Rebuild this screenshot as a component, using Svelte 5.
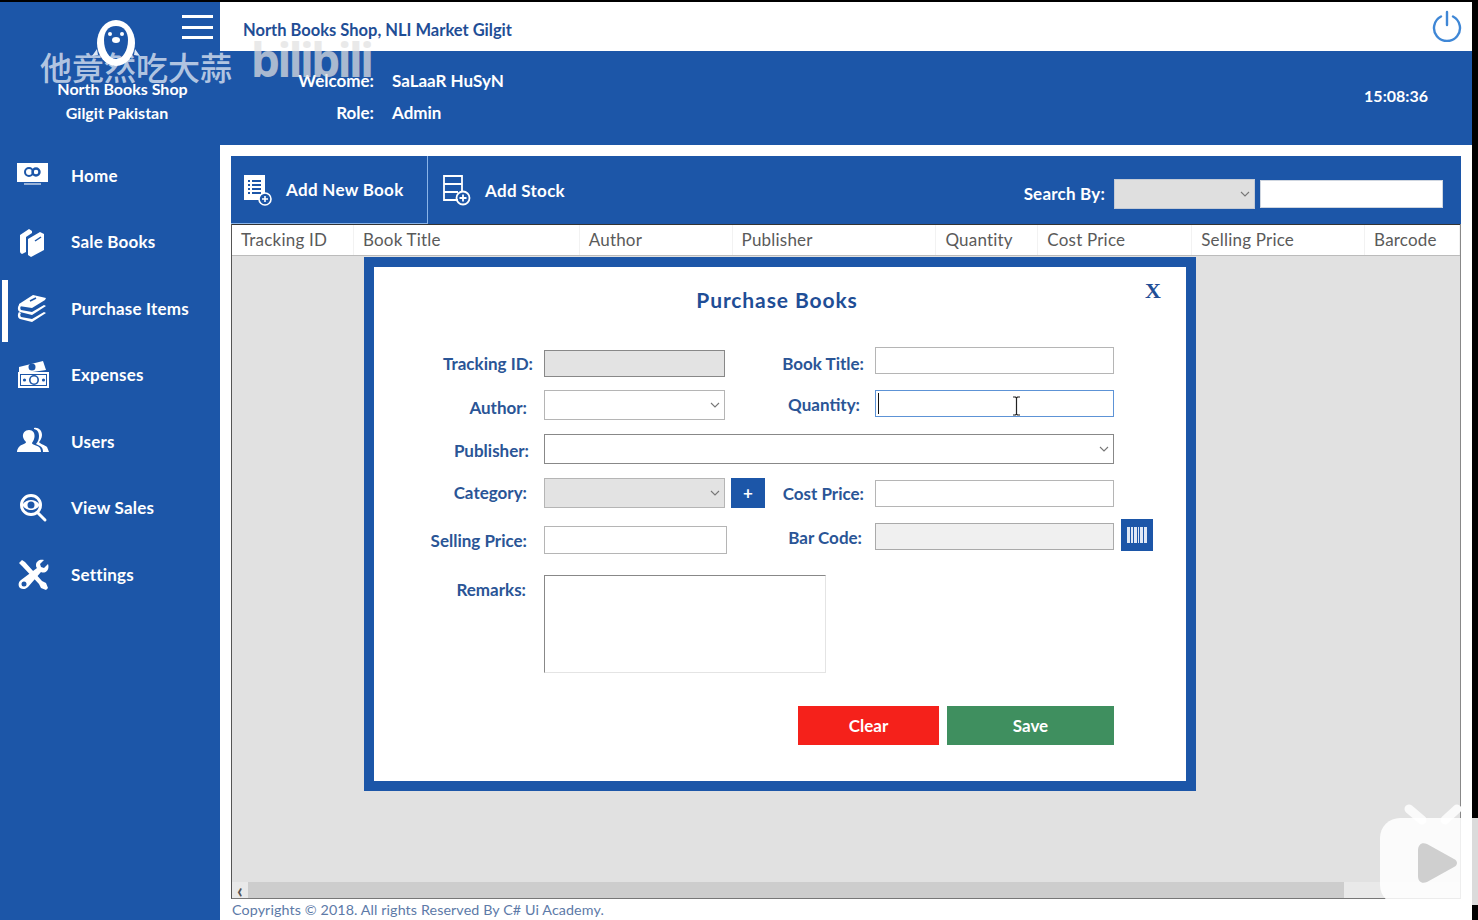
<script>
	const nav = [
		{ key: 'home', label: 'Home' },
		{ key: 'sale', label: 'Sale Books' },
		{ key: 'purchase', label: 'Purchase Items', active: true },
		{ key: 'expenses', label: 'Expenses' },
		{ key: 'users', label: 'Users' },
		{ key: 'view', label: 'View Sales' },
		{ key: 'settings', label: 'Settings' }
	];

	const columns = [
		{ label: 'Tracking ID', width: 122 },
		{ label: 'Book Title', width: 226 },
		{ label: 'Author', width: 153 },
		{ label: 'Publisher', width: 204 },
		{ label: 'Quantity', width: 102 },
		{ label: 'Cost Price', width: 154 },
		{ label: 'Selling Price', width: 173 },
		{ label: 'Barcode', width: 95 }
	];
</script>

{#snippet navIcon(key)}
	<svg class="nav-icon" viewBox="0 0 32 32" fill="#fff">
		{#if key === 'home'}
			<path d="M0 4h31v19H0z" />
			<path d="M7 24h17v2H7z" opacity=".55" />
			<circle cx="12" cy="13" r="4" fill="none" stroke="#1c56a8" stroke-width="2" />
			<circle cx="19" cy="13" r="3.500" fill="none" stroke="#1c56a8" stroke-width="2.400" />
		{:else if key === 'sale'}
			<path d="M3 9l9-6 3 2v2l-6 4v15l-4 2c-2-1-2-2-2-3z" />
			<path d="M11 13L23 6l4 2v16l-13 7-3-2z" />
			<path d="M18 15l6-4" stroke="#1c56a8" stroke-width="1.500" />
		{:else if key === 'purchase'}
			<path d="M2 12L16 3l13 3-1 2-13 8-13-2z" />
			<path d="M2 13c-2 3-1 6 1 7l12 3 14-9-2-1-12 7-11-2c-1-1-1-3 0-4z" />
			<path d="M2 20c-2 3-1 6 1 7l12 3 14-9-2-1-12 7-11-2c-1-1-1-3 0-4z" />
			<path d="M13 9l6-3" stroke="#1c56a8" stroke-width="1.600" />
		{:else if key === 'expenses'}
			<path d="M2 8L26 2l3 9-27 4z" />
			<path fill-rule="evenodd" d="M1 13h31v16H1zM3 15v12h27V15z" />
			<path d="M4 16h25v10H4z" />
			<circle cx="17" cy="21" r="5" fill="#1c56a8" />
			<circle cx="17" cy="21" r="3.400" />
			<circle cx="7.500" cy="21" r="1.600" fill="#1c56a8" />
			<circle cx="26.500" cy="21" r="1.600" fill="#1c56a8" />
			<circle cx="15" cy="8" r="3.500" fill="#1c56a8" />
		{:else if key === 'users'}
			<path d="M12 5c4 0 6 3 5.500 7-.3 3-2 5-2.500 6 0 2 6 2 8 5 1 2 1 4 1 4H0s0-3 2-5c2-3 7-3 7-5-1-1-2.500-3-3-5C5.500 8 8 5 12 5z" />
			<path d="M17 3c4-1 8 2 8 7 0 3-2 6-3 7 1 2 6 3 8 5 1 2 2 5 2 5h-6c0-3-1-5-3-6l-4-2c2-2 3-5 3-8 0-3-1-6-5-7z" />
		{:else if key === 'view'}
			<circle cx="14" cy="13" r="9.500" fill="none" stroke="#fff" stroke-width="3" />
			<path d="M5 13c3-4 6-5 9-5s6 1 9 5c-3 4-6 5-9 5s-6-1-9-5z" />
			<circle cx="14" cy="13" r="3.500" fill="#1c56a8" />
			<path d="M21 21l7 7" stroke="#fff" stroke-width="3" stroke-linecap="round" />
		{:else}
			<path d="M2 5l3-3 3 2 17 19 4 2 2 5-2 2-5-2-2-4L5 8z" />
			<path d="M31 6l-4 4-3-1-1-3 4-4c-4-1-8 1-8 5 0 1 0 2 1 3L4 22c-3 2-3 6-1 8 3 2 6 1 8-1l13-15c4 2 9-2 7-8z" />
			<circle cx="7" cy="26" r="2.500" fill="#1c56a8" />
		{/if}
	</svg>
{/snippet}

{#snippet chevron()}
	<svg class="chevron" viewBox="0 0 10 6"><path d="M1 1l4 4 4-4" fill="none" stroke="#777" stroke-width="1.100" /></svg>
{/snippet}

<div class="app">
	<aside class="sidebar">
		<div class="brand">
			<div class="logo-row">
				<svg class="logo" viewBox="0 0 48 50">
					<path d="M5 30l-5 7 6-1zM43 30l5 7-6-1z" fill="#dfe8f5" />
					<ellipse cx="24" cy="24" rx="19" ry="23" fill="#fff" />
					<path d="M24 7c8 0 12 6 12 14 0 10-5 19-12 19s-12-9-12-19c0-8 4-14 12-14z" fill="#1c56a8" />
					<circle cx="18" cy="15" r="2" fill="#fff" />
					<circle cx="30" cy="15" r="2" fill="#fff" />
					<ellipse cx="24" cy="21" rx="4" ry="3" fill="#fff" />
				</svg>
				<button class="burger" aria-label="Menu"><span></span><span></span><span></span></button>
			</div>
			<p class="shop">North Books Shop</p>
			<p class="place">Gilgit Pakistan</p>
		</div>

		<nav>
			{#each nav as item}
				<a href="#{item.key}" class:active={item.active}>
					{@render navIcon(item.key)}
					<span>{item.label}</span>
				</a>
			{/each}
		</nav>
	</aside>

	<main>
		<header class="topbar">
			<span class="address">North Books Shop, NLI Market Gilgit</span>
			<svg class="power" viewBox="0 0 32 32" fill="none" stroke="#3f87d6" stroke-width="2.400" stroke-linecap="round">
				<path d="M10 6.500a13 13 0 1 0 12 0" />
				<path d="M16 2v13" />
			</svg>
		</header>

		<div class="userbar">
			<dl>
				<dt>Welcome:</dt>
				<dd>SaLaaR HuSyN</dd>
				<dt>Role:</dt>
				<dd>Admin</dd>
			</dl>
			<time>15:08:36</time>
		</div>

		<section class="content">
			<div class="tabs">
				<button class="tab active">
					<svg viewBox="0 0 30 32">
						<path d="M1 1h21v25H1z" fill="#fff" />
						<path d="M5 7h2M9 7h9M5 11h2M9 11h9M5 15h2M9 15h9M5 19h2M9 19h9" stroke="#1c56a8" stroke-width="1.800" />
						<circle cx="22" cy="25" r="6" fill="#1c56a8" stroke="#fff" stroke-width="1.600" />
						<path d="M19 25h6M22 22v6" stroke="#fff" stroke-width="1.600" />
					</svg>
					Add New Book
				</button>
				<button class="tab">
					<svg viewBox="0 0 30 32" fill="none" stroke="#fff" stroke-width="1.800">
						<path d="M17 26H3V2h18v15" />
						<path d="M3 10h18M3 18h14" />
						<circle cx="22" cy="24" r="6.500" />
						<path d="M18.500 24h7M22 20.500v7" />
					</svg>
					Add Stock
				</button>
				<div class="search">
					<label for="search-by">Search By:</label>
					<div class="select search-select">{@render chevron()}</div>
					<input id="search-by" />
				</div>
			</div>

			<div class="grid">
				<div class="grid-head">
					{#each columns as col}
						<span style="width: {col.width}px">{col.label}</span>
					{/each}
				</div>
				<div class="grid-body"></div>
				<div class="scrollbar">
					<span class="arrow">‹</span>
					<span class="track"></span>
					<span class="arrow right">›</span>
				</div>
			</div>
			<footer>Copyrights © 2018. All rights Reserved By C# Ui Academy.</footer>
		</section>
	</main>

	<div class="dialog">
		<h2>Purchase Books</h2>
		<span class="close">X</span>

		<div class="form">
			<div class="row r1">
				<label class="left l-tracking" for="f-track">Tracking ID:</label>
				<input id="f-track" class="f-short gray down3" disabled />
				<label class="right" for="f-title">Book Title:</label>
				<input id="f-title" class="f-long" />
			</div>
			<div class="row r2">
				<label class="left l-author" for="f-qty">Author:</label>
				<div class="select f-short">{@render chevron()}</div>
				<label class="right l-qty" for="f-qty">Quantity:</label>
				<div class="qty-wrap">
					<input id="f-qty" class="f-long focus" />
					<i class="caret"></i>
					<svg class="ibeam" viewBox="0 0 9 20"><path d="M1 1h2.500l1 1 1-1H8M4.500 2v16M1 19h2.500l1-1 1 1H8" fill="none" stroke="#222" stroke-width="1.200" /></svg>
				</div>
			</div>
			<div class="row r3">
				<span class="left l-pub">Publisher:</span>
				<div class="select f-full">{@render chevron()}</div>
			</div>
			<div class="row r4">
				<span class="left l-category">Category:</span>
				<div class="select f-short gray">{@render chevron()}</div>
				<button class="plus">+</button>
				<label class="right l-cost" for="f-cost">Cost Price:</label>
				<input id="f-cost" class="f-long down2" />
			</div>
			<div class="row r5">
				<label class="left l-selling" for="f-sell">Selling Price:</label>
				<input id="f-sell" class="f-sell" />
				<label class="right l-bar" for="f-bar">Bar Code:</label>
				<input id="f-bar" class="f-long gray-light down4" disabled />
				<button class="barcode" aria-label="Generate barcode">
					<svg viewBox="0 0 22 16"><path d="M1 0h3v16H1zM5 0h2v16H5zM8 0h3v16H8zM12 0h1v16h-1zM14 0h3v16h-3zM18 0h3v16h-3z" fill="#dfe8f5" /></svg>
				</button>
			</div>
			<div class="row r6">
				<label class="left l-remarks" for="f-rem">Remarks:</label>
				<textarea id="f-rem"></textarea>
			</div>
			<div class="actions">
				<button class="clear">Clear</button>
				<button class="save">Save</button>
			</div>
		</div>
	</div>

	<!-- video player watermarks -->
	<div class="wm-text">他竟然吃大蒜</div>
	<div class="wm-logo">bilibili</div>
	<svg class="tv" viewBox="0 0 100 104">
		<path d="M42 18L29 7M65 18L77 7" stroke="#fafafa" stroke-width="9" stroke-linecap="round" />
		<rect x="0" y="16" width="130" height="87" rx="20" fill="#fff" fill-opacity=".86" />
		<path d="M38 49c0-7 4-9 9-7l27 15c4 2 4 6 0 8L47 80c-5 2-9 0-9-6z" fill="#cfcfcf" />
	</svg>
</div>

<style>
	:global(body) {
		margin: 0;
		background: #000;
	}

	.app {
		position: relative;
		display: grid;
		grid-template-columns: 220px 1252px;
		height: 918px;
		padding-top: 2px;
		overflow: hidden;
		font-family: 'Lato', 'Noto Sans', sans-serif;
		color: #fff;
	}

	p {
		margin: 0;
	}

	.sidebar {
		background: #1c56a8;
		display: flex;
		flex-direction: column;
	}

	.brand {
		height: 140px;
		font-weight: 700;
		font-size: 16px;
		text-align: center;
	}

	.logo-row {
		display: flex;
		align-items: flex-start;
		padding: 16px 0 0 92px;
		height: 44px;
	}

	.logo {
		width: 48px;
		height: 50px;
		margin-top: 1px;
		flex: none;
	}

	.burger {
		width: 31px;
		height: 24px;
		margin: -3px 0 0 42px;
		padding: 0;
		border: 0;
		background: none;
		display: flex;
		flex-direction: column;
		justify-content: space-between;
		flex: none;
	}

	.burger span {
		height: 3px;
		background: #fff;
	}

	.shop {
		margin-left: 25px;
		margin-top: 17px;
		line-height: 20px;
		width: 195px;
	}

	.place {
		margin-top: 4px;
		margin-left: 14px;
		line-height: 20px;
		width: 206px;
	}

	nav {
		display: flex;
		flex-direction: column;
	}

	nav a {
		display: flex;
		align-items: center;
		height: 66.500px;
		padding-left: 17px;
		color: #fff;
		text-decoration: none;
		font-weight: 700;
		font-size: 17px;
		letter-spacing: 0.2px;
		box-sizing: border-box;
		position: relative;
	}

	nav a.active::before {
		content: '';
		position: absolute;
		left: 2px;
		top: 5px;
		width: 6px;
		height: 62px;
		background: #fff;
	}

	.nav-icon {
		width: 32px;
		height: 32px;
		margin-right: 22px;
		flex: none;
	}

	main {
		background: #fff;
		display: flex;
		flex-direction: column;
		min-width: 0;
	}

	.topbar {
		height: 49px;
		box-sizing: border-box;
		display: flex;
		align-items: center;
		justify-content: space-between;
		padding: 6px 9px 0 23px;
		color: #1f4e96;
		font-weight: 700;
		font-size: 16.500px;
	}

	.power {
		width: 32px;
		height: 32px;
		margin-top: -7px;
	}

	.userbar {
		height: 94px;
		box-sizing: border-box;
		padding: 0 44px 2px 0;
		background: #1c56a8;
		display: flex;
		justify-content: space-between;
		align-items: center;
		font-weight: 700;
		font-size: 17px;
	}

	dl {
		margin: 0;
		display: grid;
		grid-template-columns: 154px auto;
		column-gap: 18px;
		row-gap: 12px;
		line-height: 20px;
	}

	dt {
		text-align: right;
	}

	dd {
		margin: 0;
	}

	time {
		font-size: 16px;
		margin-bottom: 4px;
	}

	.content {
		flex: 1;
		padding: 11px 11px 0;
		display: flex;
		flex-direction: column;
		min-height: 0;
	}

	.tabs {
		height: 68px;
		background: #1c56a8;
		display: flex;
		align-items: stretch;
		flex: none;
	}

	.tab {
		display: flex;
		align-items: center;
		gap: 14px;
		padding: 0 16px 0 13px;
		border: 0;
		background: none;
		color: #fff;
		font: 700 17px 'Lato', sans-serif;
		letter-spacing: 0.3px;
	}

	.tab svg {
		width: 30px;
		height: 32px;
	}

	.tab.active {
		width: 197px;
		box-sizing: border-box;
		padding-left: 12px;
		gap: 13px;
		border-right: 1px solid #8ab4e8;
		border-bottom: 1px solid #8ab4e8;
	}

	.search {
		margin-left: auto;
		display: flex;
		align-items: center;
		padding: 7px 18px 0 0;
		font-weight: 700;
		font-size: 17px;
		letter-spacing: 0.2px;
	}

	.search label {
		margin-right: 9px;
	}

	.search input {
		width: 183px;
		height: 28px;
		box-sizing: border-box;
		border: 1px solid #cfd6e0;
		background: #fff;
		margin-left: 5px;
	}

	.select.search-select {
		width: 141px;
		height: 30px;
		background: #dfdfdf;
		border-color: #c4cbd6;
	}

	.grid {
		flex: 1;
		display: flex;
		flex-direction: column;
		min-height: 0;
		border-left: 1px solid #555;
		border-right: 1px solid #888;
		border-bottom: 1px solid #777;
	}

	.grid-head {
		height: 30px;
		display: flex;
		background: #fff;
		border-bottom: 1px solid #bbb;
		border-top: 1px solid #333;
		flex: none;
	}

	.grid-head span {
		box-sizing: border-box;
		padding: 0 0 0 9px;
		line-height: 29px;
		color: #5a5a5a;
		font-size: 17px;
		letter-spacing: 0.2px;
		border-right: 1px solid #f2f2f2;
	}

	.grid-body {
		flex: 1;
		background: #e1e1e1;
	}

	.scrollbar {
		height: 16px;
		background: #e9e9e9;
		display: flex;
		align-items: center;
		flex: none;
	}

	.arrow {
		width: 16px;
		text-align: center;
		font-size: 20px;
		font-weight: 700;
		line-height: 14px;
		color: #555;
		flex: none;
	}

	.arrow.right {
		color: #bbb;
	}

	.track {
		flex: 0 0 1096px;
		height: 16px;
		background: #cdcdcd;
		margin-right: auto;
	}

	footer {
		height: 21px;
		padding-left: 1px;
		line-height: 22px;
		font-size: 14.300px;
		letter-spacing: 0.1px;
		color: #5d7aa8;
		flex: none;
	}

	.dialog {
		position: absolute;
		left: 364px;
		top: 257px;
		width: 812px;
		height: 514px;
		background: #fff;
		border: 10px solid #1c56a8;
		color: #2a5596;
		font-weight: 700;
		font-size: 17px;
	}

	h2 {
		margin: 21px 0 0;
		text-align: center;
		font-size: 21px;
		line-height: 24px;
		letter-spacing: 0.9px;
		padding-right: 6px;
		color: #1f4e96;
	}

	.close {
		position: absolute;
		right: 25px;
		top: 11px;
		font: 700 22px 'Liberation Serif', serif;
		color: #1f4e96;
	}

	.form {
		margin-top: 35px;
	}

	.row {
		display: flex;
		align-items: flex-start;
		position: relative;
	}

	.r1 {
		height: 43px;
	}

	.r2 {
		height: 44px;
	}

	.r3 {
		height: 44px;
	}

	.r4 {
		height: 41px;
	}

	.r5 {
		height: 56px;
	}

	.r6 {
		height: 131px;
	}

	.left,
	.right {
		flex: none;
		box-sizing: border-box;
		text-align: right;
		line-height: 20px;
	}

	.left {
		width: 170px;
	}

	.l-tracking {
		padding: 7px 11px 0 0;
	}

	.l-author {
		padding: 8px 17px 0 0;
	}

	.l-pub {
		padding: 7px 15px 0 0;
	}

	.l-category {
		padding: 5px 17px 0 0;
	}

	.l-selling {
		padding: 12px 17px 0 0;
	}

	.l-remarks {
		padding: 5px 18px 0 0;
	}

	.right {
		width: 150px;
		padding: 7px 11px 0 0;
	}

	.l-qty {
		padding: 5px 15px 0 0;
	}

	.l-cost {
		width: 110px;
		padding: 6px 11px 0 0;
	}

	.l-bar {
		padding: 9px 13px 0 0;
		width: 148px;
	}

	input,
	textarea {
		box-sizing: border-box;
		border: 1px solid #b5b5b5;
		background: #fff;
		margin: 0;
		border-radius: 0;
		padding: 0;
		outline: 0;
		display: block;
		flex: none;
	}

	.select {
		box-sizing: border-box;
		border: 1px solid #b5b5b5;
		background: #fff;
		display: flex;
		align-items: center;
		justify-content: flex-end;
		padding-right: 4px;
		flex: none;
	}

	.chevron {
		width: 10px;
		height: 6px;
	}

	.f-short {
		width: 181px;
		height: 30px;
	}

	input.f-short {
		height: 27px;
		border-color: #888;
	}

	.f-long {
		width: 239px;
		height: 27px;
	}

	.f-full {
		width: 570px;
		height: 30px;
		border-color: #888;
	}

	.f-sell {
		width: 183px;
		height: 28px;
		margin-top: 7px;
	}

	.gray {
		background: #e3e3e3;
	}

	.gray-light {
		background: #f0f0f0;
		border-color: #aaa;
	}

	.down2 {
		margin-top: 2px;
	}

	.down3 {
		margin-top: 3px;
	}

	.down4 {
		margin-top: 4px;
	}

	.focus {
		border-color: #5d93d6;
	}

	.qty-wrap {
		position: relative;
		width: 239px;
		flex: none;
	}

	.caret {
		position: absolute;
		left: 3px;
		top: 3px;
		width: 1px;
		height: 21px;
		background: #111;
	}

	.ibeam {
		position: absolute;
		left: 137px;
		top: 6px;
		width: 9px;
		height: 20px;
	}

	button {
		font-family: inherit;
		cursor: pointer;
	}

	.plus {
		width: 34px;
		height: 30px;
		margin-left: 6px;
		padding: 0;
		border: 0;
		background: #1c56a8;
		color: #fff;
		font-weight: 700;
		font-size: 17px;
		line-height: 28px;
		flex: none;
	}

	.barcode {
		width: 32px;
		height: 32px;
		margin-left: 7px;
		padding: 0;
		border: 0;
		background: #1c56a8;
		display: flex;
		align-items: center;
		justify-content: center;
		flex: none;
	}

	.barcode svg {
		width: 24px;
		height: 16px;
	}

	textarea {
		width: 282px;
		height: 98px;
		resize: none;
		border-color: #e4e4e4;
		border-left-color: #888;
		border-top-color: #888;
	}

	.actions {
		display: flex;
		gap: 8px;
		padding-left: 424px;
	}

	.actions button {
		height: 39px;
		border: 0;
		color: #fff;
		font-weight: 700;
		font-size: 17px;
		padding: 0;
	}

	.clear {
		width: 141px;
		background: #f5211b;
	}

	.save {
		width: 167px;
		background: #3f8f5f;
	}

	.wm-text {
		position: absolute;
		left: 40px;
		top: 46px;
		font: 500 32px/40px 'Noto Sans CJK SC', sans-serif;
		color: rgba(255, 255, 255, 0.68);
		pointer-events: none;
	}

	.wm-logo {
		position: absolute;
		left: 251px;
		top: 31px;
		font: 700 46px/56px 'Noto Sans', sans-serif;
		letter-spacing: -2.500px;
		color: rgba(225, 225, 225, 0.72);
		pointer-events: none;
	}

	.tv {
		position: absolute;
		left: 1380px;
		top: 802px;
		width: 100px;
		height: 104px;
		overflow: hidden;
		pointer-events: none;
	}
</style>
